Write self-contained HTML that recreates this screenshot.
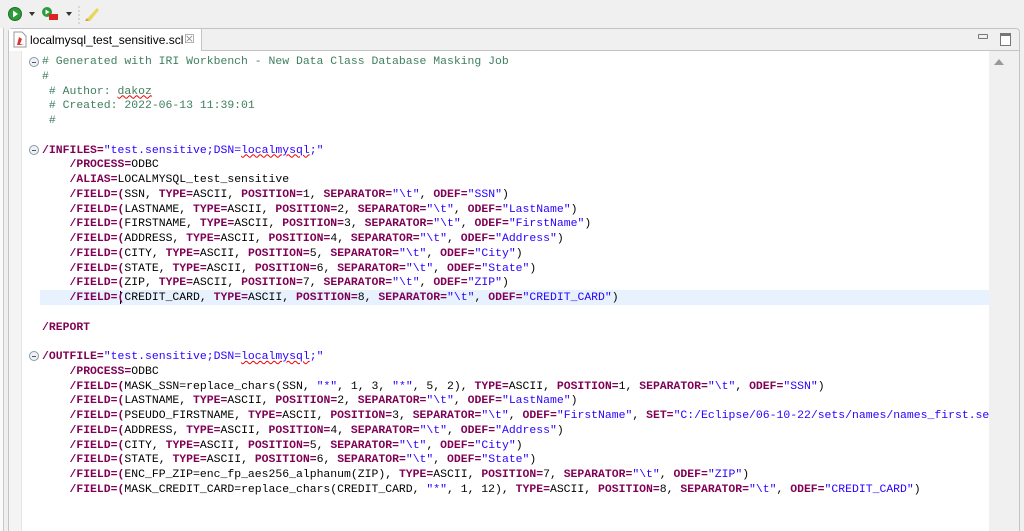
<!DOCTYPE html>
<html><head><meta charset="utf-8"><style>
html,body{margin:0;width:1024px;height:531px;overflow:hidden}
body{background:#f0f0f0;position:relative;font-family:"Liberation Sans",sans-serif}
.abs{position:absolute}
#code{position:absolute;left:42px;top:55px;font-family:"Liberation Mono",monospace;font-size:11.45px;line-height:14.75px;white-space:pre;color:#000}
.k{color:#7f0055;font-weight:bold}
.s{color:#2a00ff}
.c{color:#3f7f5f}
.sp{text-decoration:underline wavy #e00;text-decoration-thickness:1px}
.fold{position:absolute;left:29px;width:8px;height:8px;border:1px solid #8a9aa8;border-radius:50%;background:#eef2f6}
.fold:after{content:"";position:absolute;left:2px;top:3.5px;width:4px;height:1px;background:#556}
</style></head><body>
<svg class="abs" style="left:0;top:0" width="110" height="28">
<circle cx="15" cy="14" r="6.5" fill="#2f9a3a" stroke="#1d6e26"/>
<path d="M13 10.5 L18 14 L13 17.5Z" fill="#fff"/>
<path d="M29 12 L35 12 L32 16Z" fill="#333"/>
<circle cx="47" cy="12" r="5" fill="#2f9a3a"/>
<path d="M45.5 9.5 L49.5 12 L45.5 14.5Z" fill="#fff"/>
<rect x="49" y="14" width="9" height="6" fill="#d22"/>
<path d="M66 12 L72 12 L69 16Z" fill="#333"/>
<path d="M79 6 V24" stroke="#bbb" stroke-dasharray="2 2"/>
<path d="M86 20 L97 8 L99 10 L90 21Z" fill="#e9d55a"/>
<path d="M85 21 L89 21 L87 18Z" fill="#c9b030"/>
</svg>
<div class="abs" style="left:0;top:28px;width:3px;height:503px;background:#fafafa;border-right:1px solid #c8c8c8"></div>
<div class="abs" style="left:8px;top:28px;width:1010px;height:503px;border:1px solid #c4c4c4;border-bottom:none;border-radius:4px 4px 0 0;background:#f0f0f0"></div>
<div class="abs" style="left:9px;top:50px;width:1010px;height:1px;background:#c4c4c4"></div>
<div class="abs" style="left:9px;top:29px;width:192px;height:22px;background:#fff;border-right:1px solid #c4c4c4"></div>
<svg class="abs" style="left:13px;top:31px" width="14" height="17"><path d="M1 1 H9 L13 5 V16 H1Z" fill="#fff" stroke="#999"/><path d="M4 14 L6 6 L9 8 L7 13 L11 14Z" fill="#d33"/></svg>
<div class="abs" style="left:30px;top:33px;font-size:12px;color:#000">localmysql_test_sensitive.scl</div>
<div class="abs" style="left:184px;top:32px;font-size:12px;color:#888">☒</div>
<div class="abs" style="left:978px;top:34px;width:8px;height:3px;border:1px solid #777;border-radius:1px"></div>
<div class="abs" style="left:1000px;top:33px;width:9px;height:9px;border:1px solid #777;border-top-width:3px;background:#fff"></div>
<div class="abs" style="left:9px;top:51px;width:1009px;height:480px;background:#fff"></div>
<div class="abs" style="left:9px;top:51px;width:12px;height:480px;background:#f4f4f4;border-right:1px solid #e6e6e6"></div>
<div class="abs" style="left:989px;top:51px;width:29px;height:480px;background:#f0f0f0"></div>
<svg class="abs" style="left:993px;top:58px" width="12" height="8"><path d="M1 7 L6 1 L11 7Z" fill="#999"/></svg>
<div class="abs" style="left:40px;top:290px;width:949px;height:15px;background:#e8f2fe"></div>
<div class="abs" style="left:120px;top:291px;width:1px;height:13px;background:#000"></div>
<div class="fold" style="top:57px"></div>
<div class="fold" style="top:145px"></div>
<div class="fold" style="top:351px"></div>
<div id="code"><span class="c"># Generated with IRI Workbench - New Data Class Database Masking Job
#
 # Author: <span class="sp">dakoz</span>
 # Created: 2022-06-13 11:39:01
 #</span>

<span class="k">/INFILES=</span><span class="s">"test.sensitive;DSN=<span class="sp">localmysql</span>;"</span>
    <span class="k">/PROCESS=</span>ODBC
    <span class="k">/ALIAS=</span>LOCALMYSQL_test_sensitive
    <span class="k">/FIELD=(</span>SSN, <span class="k">TYPE=</span>ASCII, <span class="k">POSITION=</span>1, <span class="k">SEPARATOR=</span><span class="s">"\t"</span>, <span class="k">ODEF=</span><span class="s">"SSN"</span>)
    <span class="k">/FIELD=(</span>LASTNAME, <span class="k">TYPE=</span>ASCII, <span class="k">POSITION=</span>2, <span class="k">SEPARATOR=</span><span class="s">"\t"</span>, <span class="k">ODEF=</span><span class="s">"LastName"</span>)
    <span class="k">/FIELD=(</span>FIRSTNAME, <span class="k">TYPE=</span>ASCII, <span class="k">POSITION=</span>3, <span class="k">SEPARATOR=</span><span class="s">"\t"</span>, <span class="k">ODEF=</span><span class="s">"FirstName"</span>)
    <span class="k">/FIELD=(</span>ADDRESS, <span class="k">TYPE=</span>ASCII, <span class="k">POSITION=</span>4, <span class="k">SEPARATOR=</span><span class="s">"\t"</span>, <span class="k">ODEF=</span><span class="s">"Address"</span>)
    <span class="k">/FIELD=(</span>CITY, <span class="k">TYPE=</span>ASCII, <span class="k">POSITION=</span>5, <span class="k">SEPARATOR=</span><span class="s">"\t"</span>, <span class="k">ODEF=</span><span class="s">"City"</span>)
    <span class="k">/FIELD=(</span>STATE, <span class="k">TYPE=</span>ASCII, <span class="k">POSITION=</span>6, <span class="k">SEPARATOR=</span><span class="s">"\t"</span>, <span class="k">ODEF=</span><span class="s">"State"</span>)
    <span class="k">/FIELD=(</span>ZIP, <span class="k">TYPE=</span>ASCII, <span class="k">POSITION=</span>7, <span class="k">SEPARATOR=</span><span class="s">"\t"</span>, <span class="k">ODEF=</span><span class="s">"ZIP"</span>)
    <span class="k">/FIELD=(</span>CREDIT_CARD, <span class="k">TYPE=</span>ASCII, <span class="k">POSITION=</span>8, <span class="k">SEPARATOR=</span><span class="s">"\t"</span>, <span class="k">ODEF=</span><span class="s">"CREDIT_CARD"</span>)

<span class="k">/REPORT</span>

<span class="k">/OUTFILE=</span><span class="s">"test.sensitive;DSN=<span class="sp">localmysql</span>;"</span>
    <span class="k">/PROCESS=</span>ODBC
    <span class="k">/FIELD=(</span>MASK_SSN=replace_chars(SSN, <span class="s">"*"</span>, 1, 3, <span class="s">"*"</span>, 5, 2), <span class="k">TYPE=</span>ASCII, <span class="k">POSITION=</span>1, <span class="k">SEPARATOR=</span><span class="s">"\t"</span>, <span class="k">ODEF=</span><span class="s">"SSN"</span>)
    <span class="k">/FIELD=(</span>LASTNAME, <span class="k">TYPE=</span>ASCII, <span class="k">POSITION=</span>2, <span class="k">SEPARATOR=</span><span class="s">"\t"</span>, <span class="k">ODEF=</span><span class="s">"LastName"</span>)
    <span class="k">/FIELD=(</span>PSEUDO_FIRSTNAME, <span class="k">TYPE=</span>ASCII, <span class="k">POSITION=</span>3, <span class="k">SEPARATOR=</span><span class="s">"\t"</span>, <span class="k">ODEF=</span><span class="s">"FirstName"</span>, <span class="k">SET=</span><span class="s">"C:/Eclipse/06-10-22/sets/names/names_first.se</span>
    <span class="k">/FIELD=(</span>ADDRESS, <span class="k">TYPE=</span>ASCII, <span class="k">POSITION=</span>4, <span class="k">SEPARATOR=</span><span class="s">"\t"</span>, <span class="k">ODEF=</span><span class="s">"Address"</span>)
    <span class="k">/FIELD=(</span>CITY, <span class="k">TYPE=</span>ASCII, <span class="k">POSITION=</span>5, <span class="k">SEPARATOR=</span><span class="s">"\t"</span>, <span class="k">ODEF=</span><span class="s">"City"</span>)
    <span class="k">/FIELD=(</span>STATE, <span class="k">TYPE=</span>ASCII, <span class="k">POSITION=</span>6, <span class="k">SEPARATOR=</span><span class="s">"\t"</span>, <span class="k">ODEF=</span><span class="s">"State"</span>)
    <span class="k">/FIELD=(</span>ENC_FP_ZIP=enc_fp_aes256_alphanum(ZIP), <span class="k">TYPE=</span>ASCII, <span class="k">POSITION=</span>7, <span class="k">SEPARATOR=</span><span class="s">"\t"</span>, <span class="k">ODEF=</span><span class="s">"ZIP"</span>)
    <span class="k">/FIELD=(</span>MASK_CREDIT_CARD=replace_chars(CREDIT_CARD, <span class="s">"*"</span>, 1, 12), <span class="k">TYPE=</span>ASCII, <span class="k">POSITION=</span>8, <span class="k">SEPARATOR=</span><span class="s">"\t"</span>, <span class="k">ODEF=</span><span class="s">"CREDIT_CARD"</span>)</div>
</body></html>
